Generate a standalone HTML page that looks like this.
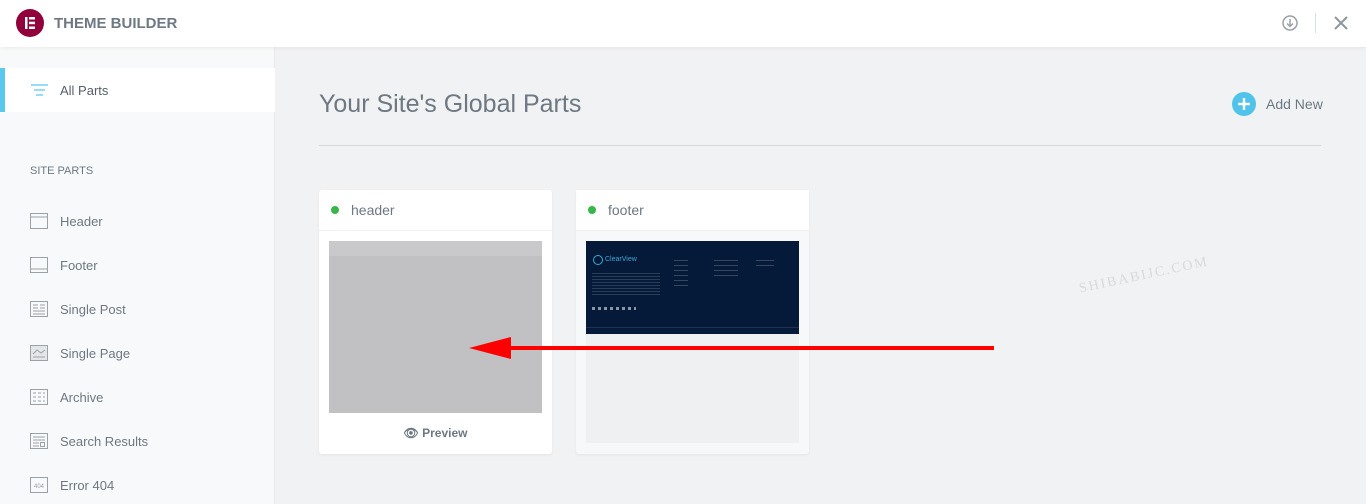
<!DOCTYPE html>
<html><head><meta charset="utf-8"><style>
*{margin:0;padding:0;box-sizing:border-box}
body{width:1366px;height:504px;overflow:hidden;background:#f1f2f4;font-family:"Liberation Sans",sans-serif;position:relative;color:#6d7882}
.top{position:absolute;left:0;top:0;width:1366px;height:47px;background:#fff;box-shadow:0 1px 4px rgba(0,0,0,.06);z-index:2}
.logo{position:absolute;left:16px;top:9px;width:28px;height:28px;border-radius:50%;background:#92003b}
.title{position:absolute;left:54px;top:15px;font-size:15px;font-weight:bold;color:#6d7882}
.side{position:absolute;left:0;top:47px;width:275px;height:457px;background:#f8f9fa;border-right:1px solid #e6e8ea}
.allp{position:absolute;left:0;top:21px;width:275px;height:44px;background:#fff;border-left:5px solid #5bc8ef}
.allp span{position:absolute;left:55px;top:15px;font-size:13px;color:#556068}
.sp{position:absolute;left:30px;top:118px;font-size:11px;color:#6d7882}
.it{position:absolute;left:30px;font-size:13px;color:#6d7882;display:flex;align-items:center}
.it svg{margin-right:12px}
h1{position:absolute;left:319px;top:90px;font-size:25px;font-weight:normal;color:#6d7882}
.hr{position:absolute;left:319px;top:145px;width:1002px;height:1px;background:#d5d8dc}
.add{position:absolute;left:1232px;top:92px;display:flex;align-items:center;font-size:14px;color:#6d7882}
.card{position:absolute;top:190px;width:233px;height:264px;background:#fff;box-shadow:0 1px 3px rgba(0,0,0,.06);border-radius:3px}
.ch{height:41px;border-bottom:1px solid #eef0f2;font-size:14px;display:flex;align-items:center;padding-left:12px}
.dot{width:8px;height:8px;border-radius:50%;background:#39b54a;margin-right:12px}
</style></head><body>
<div class="top">
<div class="logo"><svg width="28" height="28"><rect x="9" y="8" width="2.5" height="12" fill="#fff"/><rect x="13" y="8" width="6" height="2.5" fill="#fff"/><rect x="13" y="12.7" width="6" height="2.5" fill="#fff"/><rect x="13" y="17.5" width="6" height="2.5" fill="#fff"/></svg></div>
<div class="title">THEME BUILDER</div>
<svg style="position:absolute;left:1281px;top:14px" width="18" height="18"><circle cx="9" cy="9" r="7" fill="none" stroke="#9aa1a7" stroke-width="1.5"/><path d="M9 5v7M6 9.5l3 3 3-3" fill="none" stroke="#9aa1a7" stroke-width="1.5"/></svg>
<div style="position:absolute;left:1315px;top:13px;width:1px;height:20px;background:#dde0e3"></div>
<svg style="position:absolute;left:1333px;top:15px" width="16" height="16"><path d="M2 2l12 12M14 2L2 14" stroke="#8f969c" stroke-width="2"/></svg>
</div>
<div class="side">
<div class="allp"><svg style="position:absolute;left:26px;top:16px" width="17" height="12"><path d="M0 1h17M3 6h11M5 11h7" stroke="#5bc8ef" stroke-width="1.2"/></svg><span>All Parts</span></div>
<div class="sp">SITE PARTS</div>
<div class="it" style="top:166px"><svg width="18" height="16"><rect x=".5" y=".5" width="17" height="15" fill="none" stroke="#9aa1a7"/><path d="M1 4h16" stroke="#9aa1a7"/></svg>Header</div>
<div class="it" style="top:210px"><svg width="18" height="16"><rect x=".5" y=".5" width="17" height="15" fill="none" stroke="#9aa1a7"/><path d="M1 12h16" stroke="#9aa1a7"/></svg>Footer</div>
<div class="it" style="top:254px"><svg width="18" height="16"><rect x=".5" y=".5" width="17" height="15" fill="none" stroke="#9aa1a7"/><path d="M3 4h5M3 7h5M10 4h5M10 7h5M3 10h12M3 13h12" stroke="#9aa1a7"/></svg>Single Post</div>
<div class="it" style="top:298px"><svg width="18" height="16"><rect x=".5" y=".5" width="17" height="15" fill="#e4e6e8" stroke="#9aa1a7"/><path d="M3 9l4-4 4 3 4-3M3 12h12" fill="none" stroke="#9aa1a7"/></svg>Single Page</div>
<div class="it" style="top:342px"><svg width="18" height="16"><rect x=".5" y=".5" width="17" height="15" fill="none" stroke="#9aa1a7"/><path d="M3 4h3M8 4h3M13 4h2M3 8h3M8 8h3M13 8h2M3 12h3M8 12h3M13 12h2" stroke="#9aa1a7"/></svg>Archive</div>
<div class="it" style="top:386px"><svg width="18" height="16"><rect x=".5" y=".5" width="17" height="15" fill="none" stroke="#9aa1a7"/><path d="M3 4h12M3 7h12M3 10h6M3 13h6" stroke="#9aa1a7"/><rect x="10.5" y="9.5" width="4" height="4" fill="none" stroke="#9aa1a7"/></svg>Search Results</div>
<div class="it" style="top:430px"><svg width="18" height="16"><rect x=".5" y=".5" width="17" height="15" fill="none" stroke="#9aa1a7"/><text x="9" y="11" font-size="6" text-anchor="middle" fill="#9aa1a7" font-family="Liberation Sans">404</text></svg>Error 404</div>
</div>
<h1>Your Site's Global Parts</h1>
<div class="hr"></div>
<div class="add"><svg width="24" height="24" style="margin-right:10px"><circle cx="12" cy="12" r="12" fill="#4fc3ea"/><path d="M12 6v12M6 12h12" stroke="#fff" stroke-width="2.5"/></svg>Add New</div>
<div class="card" style="left:319px"><div class="ch"><span class="dot"></span>header</div>
<div style="position:absolute;left:10px;top:51px;width:213px;height:172px;background:#c1c1c3"><div style="height:15px;background:#c9c9cb"></div></div>
<div style="position:absolute;left:0;top:236px;width:233px;text-align:center;font-size:12px;font-weight:bold;color:#6d7882">&#128065;&#xFE0E; Preview</div>
</div>
<div class="card" style="left:576px;background:#f7f8f9"><div class="ch" style="background:#fff"><span class="dot"></span>footer</div>
<div style="position:absolute;left:10px;top:51px;width:213px;height:202px;background:#eff0f2"></div>
<div style="position:absolute;left:10px;top:51px;width:213px;height:93px;background:#041a38">
<div style="position:absolute;left:7px;top:14px;width:10px;height:10px;border-radius:50%;border:1.5px solid #3ba9d8"></div>
<div style="position:absolute;left:19px;top:15px;font-size:7px;color:#3ba9d8">ClearView</div>
<div style="position:absolute;left:6px;top:30px;width:68px;height:24px;background:repeating-linear-gradient(#041a38 0 2px,#2a3d58 2px 3px)"></div>
<div style="position:absolute;left:6px;top:66px;width:44px;height:3px;background:repeating-linear-gradient(90deg,#8a96a8 0 3px,#041a38 3px 6px)"></div>
<div style="position:absolute;left:88px;top:15px;width:14px;height:30px;background:repeating-linear-gradient(#041a38 0 4px,#34475f 4px 5px)"></div>
<div style="position:absolute;left:128px;top:15px;width:24px;height:20px;background:repeating-linear-gradient(#041a38 0 4px,#34475f 4px 5px)"></div>
<div style="position:absolute;left:170px;top:15px;width:18px;height:10px;background:repeating-linear-gradient(#041a38 0 4px,#34475f 4px 5px)"></div>
<div style="position:absolute;left:0;top:86px;width:213px;height:1px;background:#1e3250"></div>
</div></div>
<div style="position:absolute;left:1078px;top:268px;transform:rotate(-12deg);font-family:'Liberation Serif',serif;font-size:14px;letter-spacing:2px;color:#d8d9dc">SHIBABIJC.COM</div>
<svg style="position:absolute;left:465px;top:335px" width="532" height="26"><path d="M40 13H529" stroke="#f00" stroke-width="4"/><path d="M4 13L46 2V24Z" fill="#f00"/></svg>
</body></html>
